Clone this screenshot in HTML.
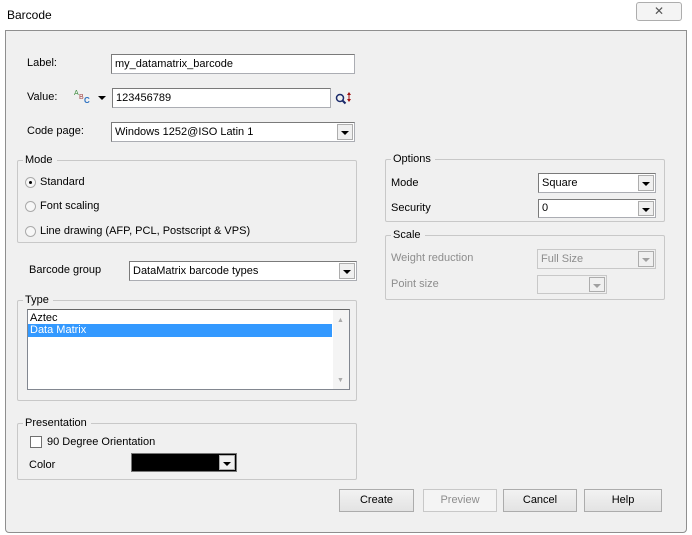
<!DOCTYPE html>
<html><head><style>
*{box-sizing:border-box;margin:0;padding:0}
body{width:692px;height:535px;background:#fff;font-family:"Liberation Sans",sans-serif;font-size:11px;color:#000;position:relative;overflow:hidden}
.a{position:absolute}
.t{position:absolute;white-space:nowrap;line-height:13px}
.inp{position:absolute;background:#fff;border:1px solid #abadb3;border-top-color:#7a7a7a;border-left-color:#7a7a7a;padding-left:3px;line-height:18px;white-space:nowrap}
.grp{position:absolute;border:1px solid #c8c8c8;border-radius:2px}
.lg{position:absolute;background:#f0f0f0;padding:0 4px 0 2px;line-height:13px;white-space:nowrap}
.dd{position:absolute;top:1px;right:1px;width:16px;bottom:1px;background:#f0f0f0;border:1px solid #adadad}
.dd:after{content:"";position:absolute;left:3px;top:6px;border-left:4px solid transparent;border-right:4px solid transparent;border-top:4px solid #000}
.dis .dd:after{border-top-color:#a0a0a0}
.dis{background:#f0f0f0;color:#8d8d8d;border-color:#c8c8c8}
.rad{position:absolute;width:11px;height:11px;border-radius:50%;border:1px solid #aaa;background:#f7f7f7}
.btn{position:absolute;height:23px;border:1px solid #acacac;background:linear-gradient(#f2f2f2,#e3e3e3);text-align:center;line-height:21px}
.g{color:#8d8d8d}
</style></head><body>
<div class="t" style="left:7px;top:9px;font-size:12px">Barcode</div>
<div class="a" style="left:636px;top:2px;width:46px;height:19px;border:1px solid #adadad;border-radius:3px;background:#f4f4f4;text-align:center;color:#555;font-size:12px;line-height:17px">✕</div>
<div class="a" style="left:5px;top:30px;width:682px;height:503px;background:#f0f0f0;border:1px solid #8f8f8f;border-radius:0 0 4px 4px"></div>

<div class="t" style="left:27px;top:57px">Label:</div>
<div class="inp" style="left:111px;top:54px;width:244px;height:20px">my_datamatrix_barcode</div>
<div class="t" style="left:27px;top:91px">Value:</div>
<div class="t" style="left:74px;top:87px;font-size:7px;color:#3a8a3a">A</div>
<div class="t" style="left:79px;top:91px;font-size:7px;color:#a04040">B</div>
<div class="t" style="left:84px;top:94px;font-size:8px;color:#2a6fc0;font-weight:bold">C</div>
<div class="a" style="left:98px;top:96px;border-left:4px solid transparent;border-right:4px solid transparent;border-top:4px solid #000"></div>
<div class="inp" style="left:112px;top:88px;width:219px;height:20px">123456789</div>
<svg class="a" style="left:334px;top:89px" width="20" height="18"><circle cx="6" cy="9" r="3.5" fill="none" stroke="#1a2a6a" stroke-width="1.5"/><path d="M8.5 11.5l3 3" stroke="#1a2a6a" stroke-width="2"/><path d="M15 3l-2 3h4z M15 13l-2-3h4z" fill="#a01010"/><path d="M15 5v6" stroke="#a01010"/></svg>
<div class="t" style="left:27px;top:125px">Code page:</div>
<div class="inp" style="left:111px;top:122px;width:244px;height:20px">Windows 1252@ISO Latin 1<div class="dd"></div></div>

<div class="grp" style="left:17px;top:160px;width:340px;height:83px"></div>
<div class="lg" style="left:23px;top:154px">Mode</div>
<div class="rad" style="left:25px;top:177px"><div class="a" style="left:3px;top:3px;width:3px;height:3px;background:#000;border-radius:50%"></div></div>
<div class="t" style="left:40px;top:176px">Standard</div>
<div class="rad" style="left:25px;top:201px"></div>
<div class="t" style="left:40px;top:200px">Font scaling</div>
<div class="rad" style="left:25px;top:226px"></div>
<div class="t" style="left:40px;top:225px">Line drawing (AFP, PCL, Postscript &amp; VPS)</div>

<div class="t" style="left:29px;top:264px">Barcode group</div>
<div class="inp" style="left:129px;top:261px;width:228px;height:20px">DataMatrix barcode types<div class="dd"></div></div>

<div class="grp" style="left:17px;top:300px;width:340px;height:101px"></div>
<div class="lg" style="left:23px;top:294px">Type</div>
<div class="a" style="left:27px;top:309px;width:323px;height:81px;background:#fff;border:1px solid #828790;border-top-color:#666"></div>
<div class="t" style="left:30px;top:312px">Aztec</div>
<div class="a" style="left:28px;top:324px;width:304px;height:13px;background:#3399ff"></div>
<div class="t" style="left:30px;top:324px;color:#fff">Data Matrix</div>
<div class="a" style="left:333px;top:310px;width:16px;height:79px;background:#f4f4f4"></div>
<div class="t" style="left:337px;top:314px;font-size:7px;color:#aaa">▲</div>
<div class="t" style="left:337px;top:374px;font-size:7px;color:#aaa">▼</div>

<div class="grp" style="left:17px;top:423px;width:340px;height:57px"></div>
<div class="lg" style="left:23px;top:417px">Presentation</div>
<div class="a" style="left:30px;top:436px;width:12px;height:12px;border:1px solid #707070;background:#fff"></div>
<div class="t" style="left:47px;top:436px">90 Degree Orientation</div>
<div class="t" style="left:29px;top:459px">Color</div>
<div class="a" style="left:131px;top:453px;width:106px;height:19px;background:#000;border:1px solid #777"><div class="dd" style="background:#f0f0f0"></div></div>

<div class="grp" style="left:385px;top:159px;width:280px;height:63px"></div>
<div class="lg" style="left:391px;top:153px">Options</div>
<div class="t" style="left:391px;top:177px">Mode</div>
<div class="inp" style="left:538px;top:173px;width:118px;height:20px">Square<div class="dd"></div></div>
<div class="t" style="left:391px;top:202px">Security</div>
<div class="inp" style="left:538px;top:199px;width:118px;height:19px;line-height:17px">0<div class="dd"></div></div>

<div class="grp" style="left:385px;top:235px;width:280px;height:65px"></div>
<div class="lg" style="left:391px;top:229px">Scale</div>
<div class="t g" style="left:391px;top:252px">Weight reduction</div>
<div class="inp dis" style="left:537px;top:249px;width:119px;height:20px">Full Size<div class="dd"></div></div>
<div class="t g" style="left:391px;top:278px">Point size</div>
<div class="inp dis" style="left:537px;top:275px;width:70px;height:19px"><div class="dd"></div></div>

<div class="btn" style="left:339px;top:489px;width:75px">Create</div>
<div class="btn g" style="left:423px;top:489px;width:74px;border-color:#c8c8c8;background:#f4f4f4">Preview</div>
<div class="btn" style="left:503px;top:489px;width:74px">Cancel</div>
<div class="btn" style="left:584px;top:489px;width:78px">Help</div>
</body></html>
